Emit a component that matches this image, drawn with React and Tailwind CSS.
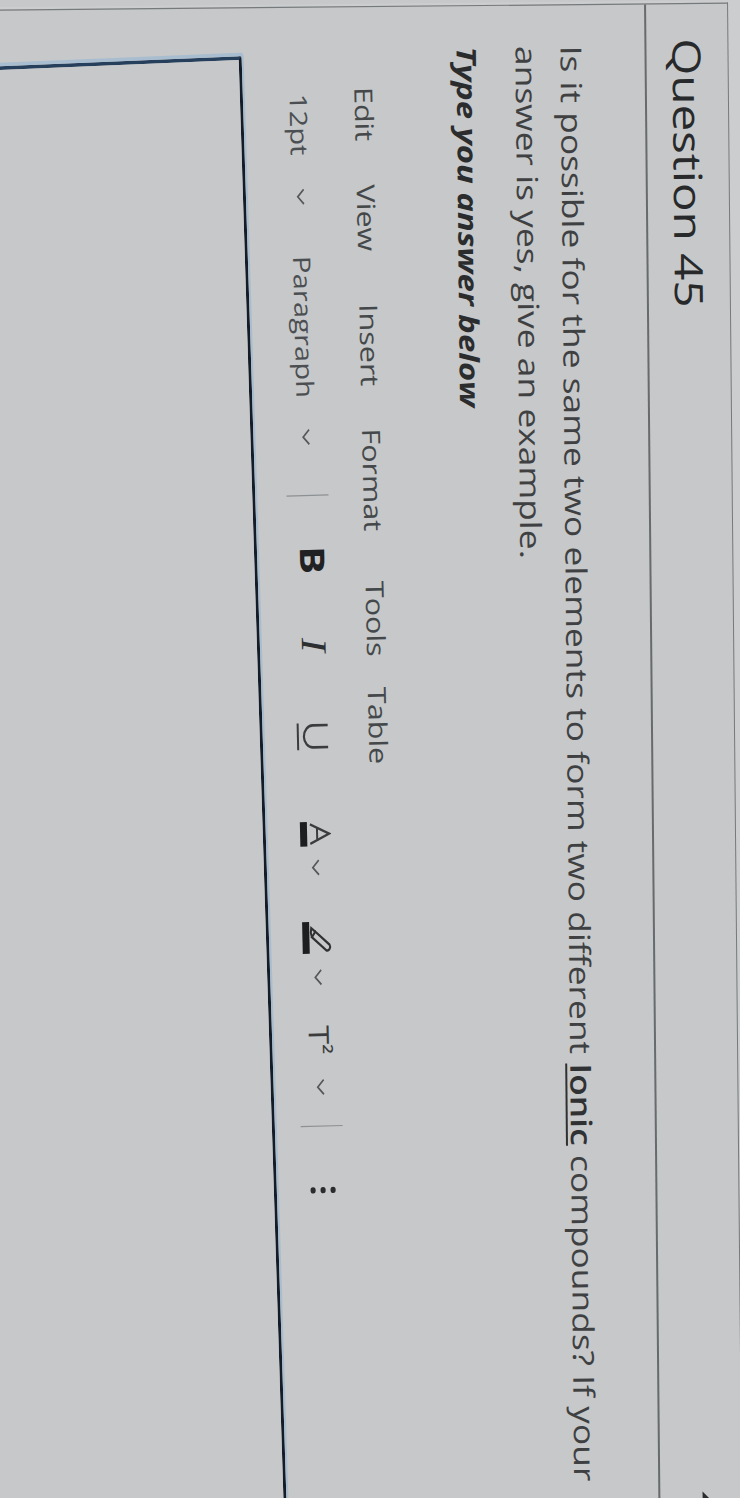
import React from "react";

function Chevron() {
  return (
    <svg width="15" height="10" viewBox="0 0 15 10">
      <path d="M1.5 2 L7.5 8 L13.5 2" fill="none" stroke="#55585b" strokeWidth="1.6" />
    </svg>
  );
}

function Sep() {
  return <span className="block w-px h-[42px] bg-[#8e9194]" />;
}

export default function App() {
  return (
    <div className="relative w-[740px] h-[1498px] overflow-hidden bg-[#c6c8c9]">
      <div className="absolute left-0 top-0 w-[1240px] h-[770px] origin-top-left translate-x-[740px] rotate-[89.45deg] scale-x-[1.22] bg-[#cbcdce] font-['Open_Sans',sans-serif] text-[#3e4042]">
        <div className="ml-[2px] mt-[12px] h-[758px] border-l border-t border-[#777a7c] bg-[#c6c8c9]">
          {/* header */}
          <div className="h-[83px] border-b-2 border-[#686b6d] pl-[28px] pr-[8px] pt-[20px] flex justify-between">
            <div className="text-[39px] leading-[39px] text-[#27292b] whitespace-nowrap">Question 45</div>
            <svg width="10" height="12" viewBox="0 0 10 12" className="mt-[7px]">
              <path d="M0 12 L10 0 L10 12 Z" fill="#2a2c2e" />
            </svg>
          </div>

          {/* body */}
          <div className="pl-[33px] pt-[50px]">
            <p className="text-[29px] leading-[45px] whitespace-nowrap">
              Is it possible for the same two elements to form two different{" "}
              <span className="font-semibold text-[#2f3133] underline decoration-2 underline-offset-[3px]">Ionic</span>{" "}
              compounds? If your
              <br />
              answer is yes, give an example.
            </p>
            <p className="mt-[20px] text-[27px] leading-[36px] font-bold italic text-[#2a2c2e] whitespace-nowrap">
              Type you answer below
            </p>

            <div className="mt-[67px] origin-top-left -rotate-[0.9deg]">
              {/* menu bar */}
              <div className="ml-[32px] flex text-[25px] leading-[36px] text-[#45484a] whitespace-nowrap">
                <span className="w-[80px]">Edit</span>
                <span className="w-[98px]">View</span>
                <span className="w-[102px]">Insert</span>
                <span className="w-[125px]">Format</span>
                <span className="w-[87px]">Tools</span>
                <span>Table</span>
              </div>

              {/* toolbar */}
              <div className="mt-[26px] ml-[36px] h-[44px] flex items-center text-[24px] leading-[44px] text-[#4c4f52] whitespace-nowrap">
                <span className="w-[77px] shrink-0">12pt</span>
                <span className="w-[56px] shrink-0 flex"><Chevron /></span>
                <span className="w-[141px] shrink-0">Paragraph</span>
                <span className="w-[55px] shrink-0 flex"><Chevron /></span>
                <span className="w-[42px] shrink-0 flex"><Sep /></span>
                <span className="w-[75px] shrink-0 text-[34px] leading-[34px] font-bold text-[#1f2123] -mt-[8px]">B</span>
                <span className="w-[68px] shrink-0 font-['Liberation_Serif',serif] italic text-[36px] leading-[36px] text-[#2d2f31] -mt-[6px]">I</span>
                <span className="w-[82px] shrink-0 flex">
                  <svg width="26" height="34" viewBox="0 0 26 34">
                    <path d="M4 2 V17 a9 9 0 0 0 18 0 V2" fill="none" stroke="#3a3c3e" strokeWidth="2.2" />
                    <rect x="2" y="31" width="22" height="2" fill="#3a3c3e" />
                  </svg>
                </span>
                <span className="w-[31px] shrink-0 flex">
                  <svg width="22" height="32" viewBox="0 0 22 32">
                    <path d="M3 21 L11 2 L19 21 M6.5 14 H15.5" fill="none" stroke="#3a3c3e" strokeWidth="2" />
                    <rect x="1" y="24" width="20" height="7" fill="#1c1e20" />
                  </svg>
                </span>
                <span className="w-[51px] shrink-0 flex"><Chevron /></span>
                <span className="w-[39px] shrink-0 flex">
                  <svg width="28" height="32" viewBox="0 0 28 32">
                    <path d="M9 18 L20 4 a3 3 0 0 1 4.5 3.5 L13.5 21.5 Z" fill="none" stroke="#2f3133" strokeWidth="2" />
                    <path d="M9 18 L6 22 L10 22.5 L13.5 21.5" fill="none" stroke="#2f3133" strokeWidth="2" />
                    <rect x="1" y="24" width="26" height="7" fill="#1c1e20" />
                  </svg>
                </span>
                <span className="w-[47px] shrink-0 flex"><Chevron /></span>
                <span className="w-[43px] shrink-0 flex items-start text-[28px] leading-[30px] text-[#3a3c3e]">
                  T<span className="text-[14px] leading-[14px] font-semibold">2</span>
                </span>
                <span className="w-[39px] shrink-0 flex"><Chevron /></span>
                <span className="w-[50px] shrink-0 flex"><Sep /></span>
                <span className="flex">
                  <svg width="6" height="26" viewBox="0 0 6 26">
                    <circle cx="3" cy="3" r="2.6" fill="#2a2c2e" />
                    <circle cx="3" cy="13" r="2.6" fill="#2a2c2e" />
                    <circle cx="3" cy="23" r="2.6" fill="#2a2c2e" />
                  </svg>
                </span>
              </div>

              {/* editor box */}
              <div className="mt-[34px] ml-[4px] h-[420px] origin-top-left -rotate-[0.6deg] border-t-[3px] border-l-[3px] border-t-[#141c27] border-l-[#263f5c] rounded-tl-[2px] shadow-[-2px_-1px_0_1px_rgba(130,175,215,0.45)]" />
            </div>
          </div>
        </div>
      </div>
    </div>
  );
}
